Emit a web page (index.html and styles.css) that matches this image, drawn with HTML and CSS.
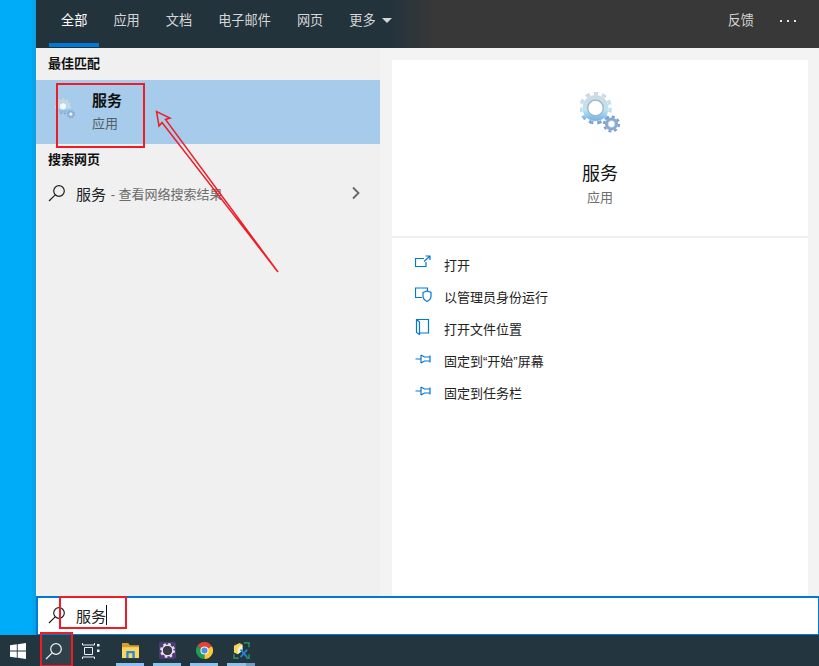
FILE: index.html
```html
<!DOCTYPE html>
<html lang="zh-CN">
<head>
<meta charset="utf-8">
<title>服务</title>
<link rel="stylesheet" href="styles.css">
</head>
<body>
<div class="screen">
  <div class="desktop"></div>
  <div class="main">
    <div class="start">
      <header class="tabs">
        <nav class="tab-list">
          <span class="tab active">全部</span>
          <span class="tab">应用</span>
          <span class="tab">文档</span>
          <span class="tab">电子邮件</span>
          <span class="tab">网页</span>
          <span class="tab">更多<i class="caret"></i></span>
        </nav>
        <div class="tab-right">
          <span class="feedback">反馈</span>
          <span class="dots"><i></i><i></i><i></i></span>
        </div>
      </header>
      <div class="panes">
        <section class="results">
          <h2 class="group first">最佳匹配</h2>
          <div class="best">
            <svg class="gear-small" viewBox="0 0 41 41"><use href="#gears"/></svg>
            <div>
              <div class="best-title">服务</div>
              <div class="best-sub">应用</div>
            </div>
          </div>
          <h2 class="group">搜索网页</h2>
          <div class="web">
            <svg class="search-ic" viewBox="0 0 18 18"><circle cx="11" cy="7" r="5.3"/><path d="M7.2 10.8 1 17"/></svg>
            <span class="web-main">服务</span><span class="web-sub"> - 查看网络搜索结果</span>
            <svg class="chev" viewBox="0 0 10 14"><path d="M2 1.5 7.5 7 2 12.5"/></svg>
          </div>
        </section>
        <section class="detail">
          <div class="card">
            <div class="hero">
              <svg class="gear-big" viewBox="1 0 41 41"><use href="#gears"/></svg>
              <div class="hero-title">服务</div>
              <div class="hero-sub">应用</div>
            </div>
            <ul class="actions">
              <li><svg viewBox="0 0 18 16"><path d="M9 3.500H.5V11.500H11V7M9 6.500 14.500 1.500M10.500 1H15V5"/></svg>打开</li>
              <li><svg viewBox="0 0 18 16"><path d="M7 10.500H.5V1H12.500V3.500M8 5.500 12 4 16 5.500V9C16 11.500 14 13.500 12 14.500 10 13.500 8 11.500 8 9Z"/></svg>以管理员身份运行</li>
              <li><svg viewBox="0 0 18 16"><path d="M1.500 .5H13.500V14H4.500V15.500L1.500 13.500ZM1.500 .5 4.500 3V14"/></svg>打开文件位置</li>
              <li><svg viewBox="0 0 18 16"><path d="M.5 8H6M6 4V12M6 4 9.500 6H15M6 12 9.500 10H15M15 4.500V11.500"/></svg>固定到“开始”屏幕</li>
              <li><svg viewBox="0 0 18 16"><path d="M.5 8H6M6 4V12M6 4 9.500 6H15M6 12 9.500 10H15M15 4.500V11.500"/></svg>固定到任务栏</li>
            </ul>
          </div>
        </section>
      </div>
      <div class="searchbox">
        <svg class="search-ic" viewBox="0 0 18 18"><circle cx="11" cy="7" r="5.3"/><path d="M7.2 10.8 1 17"/></svg>
        <span class="query">服务</span><i class="cursor"></i>
      </div>
    </div>
  </div>
  <footer class="taskbar">
    <svg class="win" viewBox="0 0 16 16"><path d="M0 2.300 6.800 1.300V7.500H0ZM7.700 1.200 16 0V7.500H7.700ZM0 8.400H6.800V14.700L0 13.700ZM7.700 8.400H16V16L7.700 14.800Z"/></svg>
    <div class="tb-search"><svg viewBox="0 0 18 18"><circle cx="11" cy="7" r="5.3"/><path d="M7.200 10.800 1 17"/></svg></div>
    <svg class="taskview" viewBox="0 0 18 16"><path d="M.5 0V2H12.500V0M.5 16V14H12.500V16M2.500 4.500H10.500V11.500H2.500Z"/><path class="fill" d="M15 1H17.500V3.500H15ZM15 6.500H17.500V9H15Z"/></svg>
    <div class="app first">
      <svg viewBox="0 0 18 18"><path fill="#d79c2c" d="M0 1H6.500L8.500 3.500H18V7H0Z"/><path fill="#fbd560" d="M0 5.500H18V17H0Z"/><path fill="#2a8ad4" d="M4.500 9.500H13.500V17H11V12H7V17H4.500Z"/></svg>
    </div>
    <div class="app">
      <svg viewBox="0 0 18 18"><rect width="18" height="18" rx="2" fill="#4f3a78"/><circle cx="9" cy="9" r="6.800" fill="none" stroke="#e6e3ec" stroke-width="2.200" stroke-dasharray="2.700 2.640"/><circle cx="9" cy="9" r="5.600" fill="none" stroke="#e6e3ec" stroke-width="1.600"/><circle cx="9" cy="9" r="4.800" fill="#3a3a44"/></svg>
    </div>
    <div class="app">
      <svg viewBox="0 0 18 18"><path fill="#dc4537" d="M9 9 1.200 4.500A9 9 0 0 1 16.800 4.500Z"/><path fill="#1e9c54" d="M9 9 1.200 4.500A9 9 0 0 0 9 18Z"/><path fill="#fcc934" d="M9 9 16.800 4.500A9 9 0 0 1 9 18Z"/><circle cx="9" cy="9" r="4.300" fill="#f1f1f1"/><circle cx="9" cy="9" r="3.200" fill="#4f8ee8"/></svg>
    </div>
    <div class="app split">
      <svg viewBox="0 0 18 18"><path fill="#f7d554" d="M1 4 7 1 10 3V9L5 13 1 11Z"/><path fill="#f2f0e4" d="M5 6 10 3V9L5 13Z"/><path fill="none" stroke="#1f84cf" stroke-width="2" d="M8 8 15 16M15 8 8 16"/><path fill="none" stroke="#2ea56b" stroke-width="1.300" d="M11.500 1H17V5.500M1 13V17H6M17 13V17H14"/></svg>
    </div>
  </footer>
  <svg class="annot" viewBox="0 0 819 666">
    <defs>
      <linearGradient id="g1" gradientUnits="userSpaceOnUse" x1="0" y1="0" x2="0" y2="33"><stop offset="0" stop-color="#cfd8e2"/><stop offset=".55" stop-color="#bfe3f0"/><stop offset=".75" stop-color="#86c2f2"/><stop offset="1" stop-color="#7b9cc2"/></linearGradient>
      <g id="gears">
        <circle cx="16.500" cy="16" r="14.800" fill="none" stroke="url(#g1)" stroke-width="3.400" stroke-dasharray="4.400 4.050"/>
        <circle cx="16.500" cy="16" r="13" fill="url(#g1)"/>
        <circle cx="16.500" cy="16" r="7.800" fill="#fff" stroke="#9db4c4" stroke-width="1.300"/>
        <circle cx="32.500" cy="32" r="7.400" fill="none" stroke="#7ea0c8" stroke-width="2.400" stroke-dasharray="3 2.810"/>
        <circle cx="32.500" cy="32" r="6.500" fill="#88a9cf"/>
        <circle cx="32.500" cy="32" r="3.300" fill="#fff" stroke="#c3dbe9" stroke-width=".8"/>
      </g>
    </defs>
    <rect class="box" x="57" y="84" width="87" height="63"/>
    <rect class="box" x="60" y="597" width="66" height="31"/>
    <rect class="box" x="41" y="633" width="31" height="33"/>
    <path class="arrow" d="M278 272 165.500 119.500 170 118 156.500 111.500 159 126 162 122.500Z"/>
  </svg>
</div>
</body>
</html>
```

FILE: styles.css
```css
* { box-sizing: border-box; }
html, body { margin: 0; padding: 0; }
body { font-family: "Liberation Sans", "Noto Sans CJK SC", sans-serif; color: #1a1a1a; }
.screen { position: relative; width: 819px; height: 666px; overflow: hidden; display: flex; flex-wrap: wrap; align-content: flex-start; }
.desktop { width: 36px; height: 635px; background: linear-gradient(90deg, #00acf8 0, #00acf8 85%, #0a9fdf 100%); }
.main { width: 783px; height: 635px; }
.start { height: 100%; display: flex; flex-direction: column; }

.tabs { height: 48px; background: linear-gradient(90deg, #22333c 0, #22333c 45%, #383838 51%, #383838 100%); display: flex; justify-content: space-between; color: #d6d6d6; font-size: 13.2px; }
.tab-list { display: flex; padding-left: 13px; gap: 2px; }
.tab { height: 47px; padding: 11px 12px 0; line-height: 19px; border-bottom: 4px solid transparent; white-space: nowrap; }
.tab.active { color: #fff; border-bottom-color: #0078d7; }
.caret { display: inline-block; margin-left: 6px; vertical-align: 2px; border-left: 5px solid transparent; border-right: 5px solid transparent; border-top: 5px solid #d6d6d6; }
.tab-right { display: flex; gap: 26px; padding: 11px 23px 0 0; line-height: 19px; }
.dots { display: flex; gap: 5px; align-items: center; height: 19px; }
.dots i { width: 2px; height: 2px; background: #e6e6e6; }

.panes { flex: 1; display: flex; min-height: 0; }
.results { width: 344px; background: #f0f0f0; }
.group { margin: 0; padding: 7px 12px 0; height: 32px; font-size: 13px; line-height: 18px; font-weight: 700; color: #111; }
.best { height: 64px; background: #a7cbea; display: flex; padding: 12px 0 0 56px; position: relative; }
.gear-small { position: absolute; left: 19px; top: 18px; width: 20px; height: 21px; opacity: .85; }
.best-title { font-size: 15px; line-height: 18px; font-weight: 700; color: #111; }
.best-sub { font-size: 13px; line-height: 18px; margin-top: 5px; color: #555e66; }
.web { display: flex; align-items: center; height: 38px; padding-left: 12px; position: relative; margin-top: -2px; }
.search-ic { width: 18px; height: 18px; fill: none; stroke: #222; stroke-width: 1.2; flex: none; }
.web-main { margin-left: 10px; font-size: 15px; color: #222; }
.web-sub { margin-left: 1px; font-size: 13px; color: #6b6b6b; white-space: pre; }
.chev { position: absolute; left: 315px; top: 12px; width: 10px; height: 14px; fill: none; stroke: #666; stroke-width: 1.8; }

.detail { flex: 1; background: #f3f3f3; padding: 12px 11px 0 12px; }
.card { background: #fff; height: 100%; }
.hero { height: 178px; border-bottom: 2px solid #f0f0f0; display: flex; flex-direction: column; align-items: center; padding-top: 32px; }
.gear-big { width: 41px; height: 41px; flex: none; }
.hero-title { margin-top: 29px; font-size: 18px; line-height: 24px; color: #111; }
.hero-sub { margin-top: 3px; font-size: 13px; line-height: 18px; color: #6e6e6e; }
.actions { list-style: none; margin: 0; padding: 10px 0 0 23px; font-size: 13px; color: #222; }
.actions li { height: 32px; display: flex; align-items: center; gap: 11px; }
.actions svg { width: 18px; height: 16px; margin-top: -2px; fill: none; stroke: #0078d7; stroke-width: 1.2; flex: none; }

.searchbox { height: 39px; background: #fff; border: 2px solid #0078d7; border-bottom-width: 1px; border-right-width: 1px; display: flex; align-items: center; padding: 0 0 2px 10px; }
.query { margin-left: 10px; font-size: 15px; color: #222; }
.cursor { width: 1px; height: 20px; background: #111; }

.taskbar { width: 819px; height: 31px; background: #233640; display: flex; align-items: flex-start; position: relative; }
.win { width: 16px; height: 16px; fill: #fff; margin: 8px 0 0 10px; }
.tb-search { width: 32px; height: 31px; margin-left: 14px; background: #2f424c; display: flex; align-items: center; justify-content: center; padding-right: 5px; }
.tb-search svg { width: 18px; height: 18px; fill: none; stroke: #f0f0f0; stroke-width: 1.2; }
.taskview { width: 18px; height: 16px; margin: 8px 0 0 10px; fill: none; stroke: #eef; stroke-width: 1; }
.taskview .fill { fill: #eef; stroke: none; }
.app { width: 28px; height: 31px; margin-left: 9px; display: flex; justify-content: center; padding-top: 7px; border-bottom: 3px solid #8bc3ec; }
.app.first { margin-left: 16px; }
.app.split { position: relative; }
.app.split::after { content: ""; position: absolute; right: 0; bottom: -3px; width: 9px; height: 3px; background: #6f9cc0; }
.app svg { width: 17px; height: 17px; }

.annot { position: absolute; left: 0; top: 0; width: 819px; height: 666px; pointer-events: none; }
.box { fill: none; stroke: #ee1c25; stroke-width: 2; }
.arrow { fill: none; stroke: #ee1c25; stroke-width: 1.5; }
```
